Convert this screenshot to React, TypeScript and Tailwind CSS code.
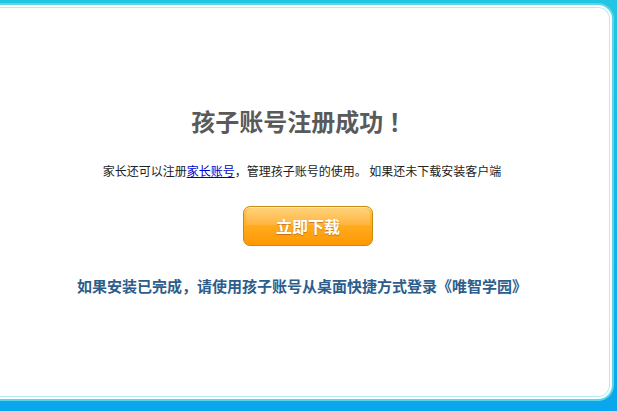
const cjk = { fontFamily: '"Noto Sans CJK SC", "Liberation Sans", sans-serif' }

function DownloadButton() {
  return (
    <button
      type="button"
      className="relative ml-[12px] flex h-[40px] w-[130px] items-center justify-center overflow-hidden rounded-[7px] border border-[#c98a12] bg-gradient-to-b from-[#ffc04a] via-[#ffab1c] to-[#ff9800] shadow-[inset_0_1px_0_rgba(255,255,255,0.6)]"
    >
      {/* glossy upper half */}
      <span className="absolute inset-x-[2px] top-[1px] h-[17px] rounded-t-[6px] bg-gradient-to-b from-[#ffd27a] to-[#ffb43a]" />
      <span
        className="relative text-[16px] font-bold leading-none text-white [text-shadow:0_1px_1px_rgba(160,80,0,0.6)]"
        style={cjk}
      >
        立即下载
      </span>
    </button>
  )
}

export default function App() {
  return (
    <div className="flex h-[411px] w-[617px] flex-col overflow-hidden bg-gradient-to-b from-[#22c6e2] via-[#14b6ea] to-[#0aa6ee]" style={cjk}>
      <div className="ml-[-20px] mr-[3px] mt-[3px] mb-[10px] flex flex-1 flex-col items-center rounded-[16px] border-[2px] border-[#5cd6e6] bg-white pl-[10px] shadow-[inset_0_0_0_2px_#ffffff,inset_0_0_0_3px_#b4eef4]">
        <h1 className="mt-[99px] text-[24px] font-bold leading-[34px] text-[#5a5a5a]">
          孩子账号注册成功 ！
        </h1>
        <p className="mt-[25px] text-[12px] leading-[16px] text-[#222]">
          家长还可以注册
          <a href="#" className="text-[#0000cc] underline">
            家长账号
          </a>
          ，管理孩子账号的使用。 如果还未下载安装客户端
        </p>
        <div className="mt-[27px]">
          <DownloadButton />
        </div>
        <p className="mt-[30px] text-[15px] font-bold leading-[20px] text-[#2d5d8b]">
          如果安装已完成，请使用孩子账号从桌面快捷方式登录《唯智学园》
        </p>
      </div>
    </div>
  )
}
